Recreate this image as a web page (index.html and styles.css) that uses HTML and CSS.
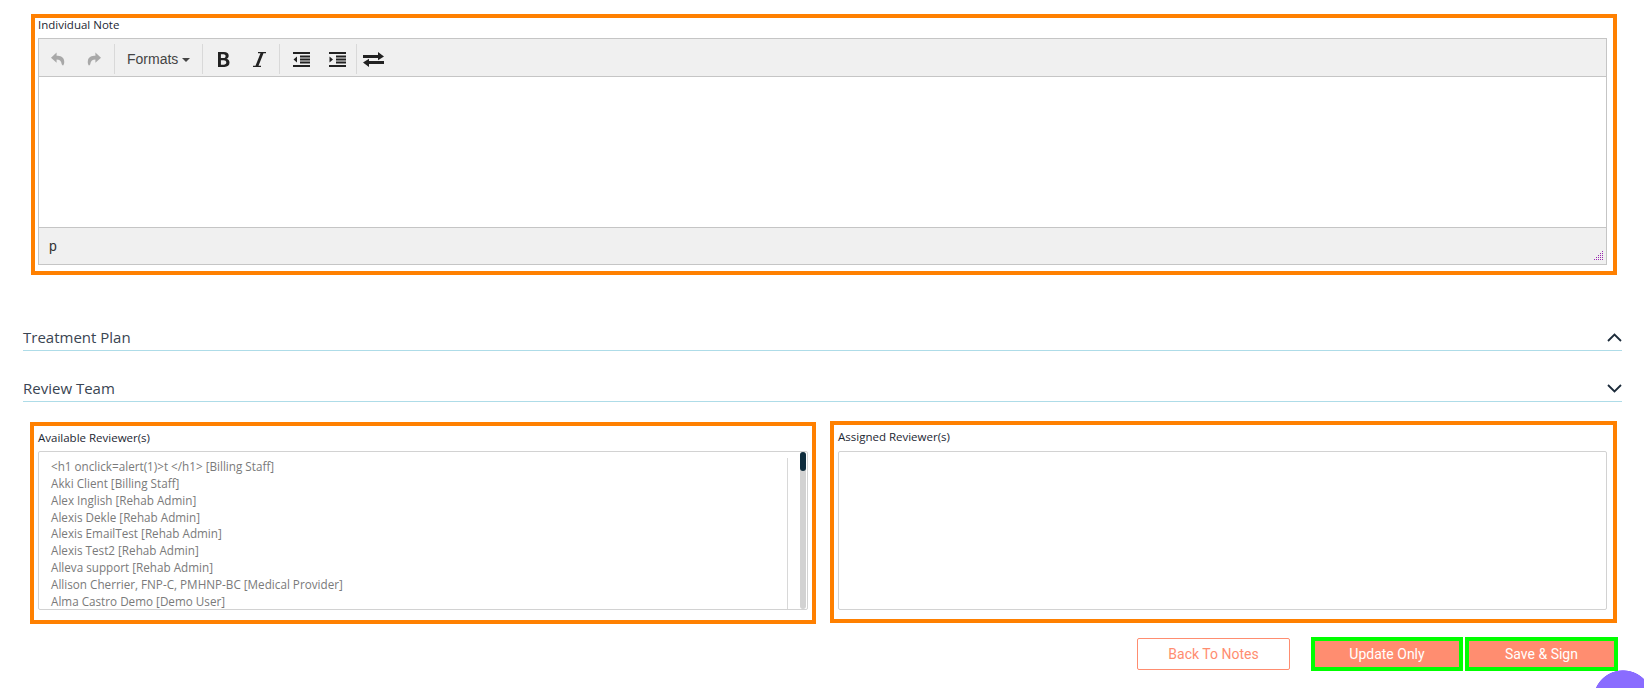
FILE: index.html
```html
<!DOCTYPE html>
<html lang="en">
<head>
<meta charset="utf-8">
<title>Individual Note</title>
<link rel="stylesheet" href="styles.css">
</head>
<body>
<main class="page">
  <section class="note-box">
    <label class="field-label">Individual Note</label>
    <div class="editor">
      <div class="toolbar">
        <div class="tool-group history">
          <button class="tool muted" aria-label="Undo"><svg width="14" height="15" viewBox="0 0 15 15"><path d="M6 0 0 5.500l6 5.500V7.500c3 0 5 1.500 5.500 5 .5 1 1 1.500 1.500 1.500 1-1.500 1.500-3.500 1-5.500C13.500 5 10 3.500 6 3.500z"/></svg></button>
          <button class="tool muted" aria-label="Redo"><svg width="14" height="15" viewBox="0 0 15 15"><path d="M9 0l6 5.500L9 11V7.500c-3 0-5 1.500-5.500 5-.5 1-1 1.500-1.500 1.500-1-1.500-1.500-3.500-1-5.500C1.500 5 5 3.500 9 3.500z"/></svg></button>
        </div>
        <div class="tool-group formats"><span class="formats-text">Formats</span><span class="caret"></span></div>
        <div class="tool-group bi">
          <button class="tool" aria-label="Bold"><svg width="13" height="15" viewBox="0 0 13 15"><path fill-rule="evenodd" d="M1 0h6c3 0 4.700 1.300 4.700 3.700 0 1.500-.9 2.700-2.300 3.100 1.900.4 3.100 1.700 3.100 3.800 0 2.900-2 4.400-5 4.400H1zM3.900 2.300v3.800h2.500c1.300 0 2.200-.7 2.200-1.900s-.9-1.900-2.200-1.900zM3.900 8.300v4.400h2.800c1.500 0 2.600-.8 2.600-2.200s-1.100-2.200-2.600-2.200z"/></svg></button>
          <button class="tool" aria-label="Italic"><svg width="13" height="15" viewBox="0 0 13 15"><path d="M5 0h8v1.200h-2.500L5.500 13.800H8V15H0v-1.200h2.500L7.500 1.200H5z"/></svg></button>
        </div>
        <div class="tool-group indents">
          <button class="tool" aria-label="Decrease indent"><svg width="17" height="15" viewBox="0 0 17 15"><path d="M0 0h17v2H0zM7 3.500h10v2H7zM7 6.500h10v2H7zM7 9.500h10v2H7zM0 13h17v2H0zM4 4.500v6L.5 7.500z"/></svg></button>
          <button class="tool" aria-label="Increase indent"><svg width="17" height="15" viewBox="0 0 17 15"><path d="M0 0h17v2H0zM7 3.500h10v2H7zM7 6.500h10v2H7zM7 9.500h10v2H7zM0 13h17v2H0zM.5 4.500v6L4 7.500z"/></svg></button>
        </div>
        <div class="tool-group last">
          <button class="tool" aria-label="Text direction"><svg width="21" height="15" viewBox="0 0 21 15"><path d="M0 3h15V0l6 4.500-6 3.800V6H0zM21 9H6V6.800L0 10.500 6 15v-3h15z"/></svg></button>
        </div>
      </div>
      <div class="edit-area"></div>
      <div class="statusbar">
        <span class="path">p</span>
        <svg class="grip" width="10" height="10" viewBox="0 0 10 10"><path d="M8 0h1v1H8zM6 2h1v1H6zM8 2h1v1H8zM4 4h1v1H4zM6 4h1v1H6zM8 4h1v1H8zM2 6h1v1H2zM4 6h1v1H4zM6 6h1v1H6zM8 6h1v1H8zM0 8h1v1H0zM2 8h1v1H2zM4 8h1v1H4zM6 8h1v1H6zM8 8h1v1H8z"/></svg>
      </div>
    </div>
  </section>

  <div class="accordion first">
    <span class="acc-title">Treatment Plan</span>
    <svg class="chev" width="15" height="9" viewBox="0 0 15 9"><path d="M1 8l6.500-6.500L14 8"/></svg>
  </div>
  <div class="accordion second">
    <span class="acc-title">Review Team</span>
    <svg class="chev" width="15" height="9" viewBox="0 0 15 9"><path d="M1 1l6.500 6.500L14 1"/></svg>
  </div>

  <div class="reviewers">
    <section class="rev-box available">
      <label class="field-label">Available Reviewer(s)</label>
      <div class="listbox">
        <ul class="rev-list">
          <li>&lt;h1 onclick=alert(1)&gt;t &lt;/h1&gt; [Billing Staff]</li>
          <li>Akki Client [Billing Staff]</li>
          <li>Alex Inglish [Rehab Admin]</li>
          <li>Alexis Dekle [Rehab Admin]</li>
          <li>Alexis EmailTest [Rehab Admin]</li>
          <li>Alexis Test2 [Rehab Admin]</li>
          <li>Alleva support [Rehab Admin]</li>
          <li>Allison Cherrier, FNP-C, PMHNP-BC [Medical Provider]</li>
          <li>Alma Castro Demo [Demo User]</li>
        </ul>
        <div class="rail-line"></div>
        <div class="scrollbar"><div class="thumb"></div></div>
      </div>
    </section>
    <section class="rev-box assigned">
      <label class="field-label">Assigned Reviewer(s)</label>
      <div class="listbox"></div>
    </section>
  </div>

  <div class="actions">
    <button class="btn ghost">Back To Notes</button>
    <button class="btn solid update">Update Only</button>
    <button class="btn solid save">Save &amp; Sign</button>
  </div>
</main>
<div class="chat-bubble"></div>
</body>
</html>
```
FILE: styles.css
```css
* { box-sizing: border-box; }
html, body { margin: 0; padding: 0; height: 688px; overflow: hidden; background: #fff; }
body { font-family: "Open Sans", "Liberation Sans", sans-serif; color: #333; position: relative; }
.page { padding: 14px 22px 0 23px; }
.note-box {
  margin: 0 5px 0 8px;
  height: 261px;
  border: 4px solid #ff8000;
  padding: 0 6px 0 3px;
}
.field-label { display: block; font-size: 11.500px; line-height: 14px; height: 20px; color: #1d2733; }
.editor { border: 1px solid #c5c5c5; height: 227px; display: flex; flex-direction: column; }
.toolbar {
  height: 38px;
  background: #f0f0f0;
  border-bottom: 1px solid #c5c5c5;
  display: flex;
  align-items: flex-start;
  padding: 5px 0 0 1px;
}
.tool-group { display: flex; align-items: center; height: 30px; border-right: 1px solid #d9d9d9; }
.tool-group.last { border-right: 0; }
.tool {
  width: 36px; height: 30px; padding: 0; border: 0; background: none;
  display: flex; align-items: center; justify-content: center;
}
.tool svg { fill: #222; display: block; }
.tool.muted svg { fill: #a8a8a8; }
.tool-group.last .tool { width: 33px; }
.history { padding-right: 2px; }
.bi { padding-left: 2px; padding-right: 2px; }
.indents { padding-left: 3px; padding-right: 1px; }
.formats { width: 88px; padding-left: 12px; }
.formats-text { font-family: "Liberation Sans", sans-serif; font-size: 14px; color: #444; }
.caret {
  margin-left: 4px; width: 0; height: 0; margin-top: 1px;
  border-left: 4px solid transparent; border-right: 4px solid transparent; border-top: 4px solid #444;
}
.edit-area { flex: 1; background: #fff; }
.statusbar {
  height: 37px;
  background: #f0f0f0;
  border-top: 1px solid #c5c5c5;
  display: flex; align-items: center; justify-content: space-between;
  padding-left: 10px;
}
.path { font-family: "Liberation Sans", sans-serif; font-size: 14px; color: #333; }
.grip { fill: #9a2ab0; align-self: flex-end; margin: 0 2px 3px 0; }
.accordion {
  display: flex; align-items: center; justify-content: space-between;
  height: 27px;
  border-bottom: 1px solid #aedce8;
}
.accordion.first { margin-top: 49px; }
.accordion.second { margin-top: 24px; }
.acc-title { font-size: 15px; color: #3a4552; }
.chev { fill: none; stroke: #1c2b3a; stroke-width: 1.800; }
.reviewers { display: flex; margin: 20px 5px 0 7px; gap: 14px; align-items: flex-start; }
.rev-box { border: 4px solid #ff8000; padding: 0 4px; height: 202px; }
.available { width: 786px; }
.assigned { width: 787px; margin-top: -1px; padding-right: 6px; }
.rev-box .field-label { height: 25px; padding-top: 4px; line-height: 16px; }
.listbox {
  border: 1px solid #d2d2d2; border-radius: 2px; height: 159px;
  display: flex; background: #fff;
}
.assigned .listbox { margin-top: 1px; }
.rev-list {
  list-style: none; margin: 0; padding: 6px 0 0 12px; flex: 1;
  font-size: 11.700px; line-height: 16.850px; color: #7a7a7a; overflow: hidden;
}
.rev-list li { white-space: nowrap; }
.rail-line { width: 1px; background: #d8d8d8; margin: 6px 12px 0 0; }
.scrollbar { width: 6px; margin-right: 1px; background: #d2d2d2; border-radius: 3px; }
.thumb { height: 19px; background: #0f2d3d; border-radius: 3px; }
.actions { display: flex; justify-content: flex-end; align-items: center; margin: 13px 4px 0 0; }
.btn { font-family: Roboto, sans-serif; font-size: 14px; cursor: pointer; border-radius: 0; }
.ghost {
  width: 153px; height: 32px; margin-right: 21px;
  background: #fff; color: #ff8d70; border: 1px solid #ff8d70; border-radius: 2px;
}
.solid {
  height: 34px; background: #ff8d70; color: #fff; font-weight: 400;
  border: 4px solid #00ff00;
}
.update { width: 152px; margin-right: 2px; }
.save { width: 153px; }
.chat-bubble {
  position: absolute; right: 0; bottom: 0; width: 51px; height: 18px;
  background: radial-gradient(circle 30px at 30px 30px, #8a6cff 98%, transparent 100%);
}
```
